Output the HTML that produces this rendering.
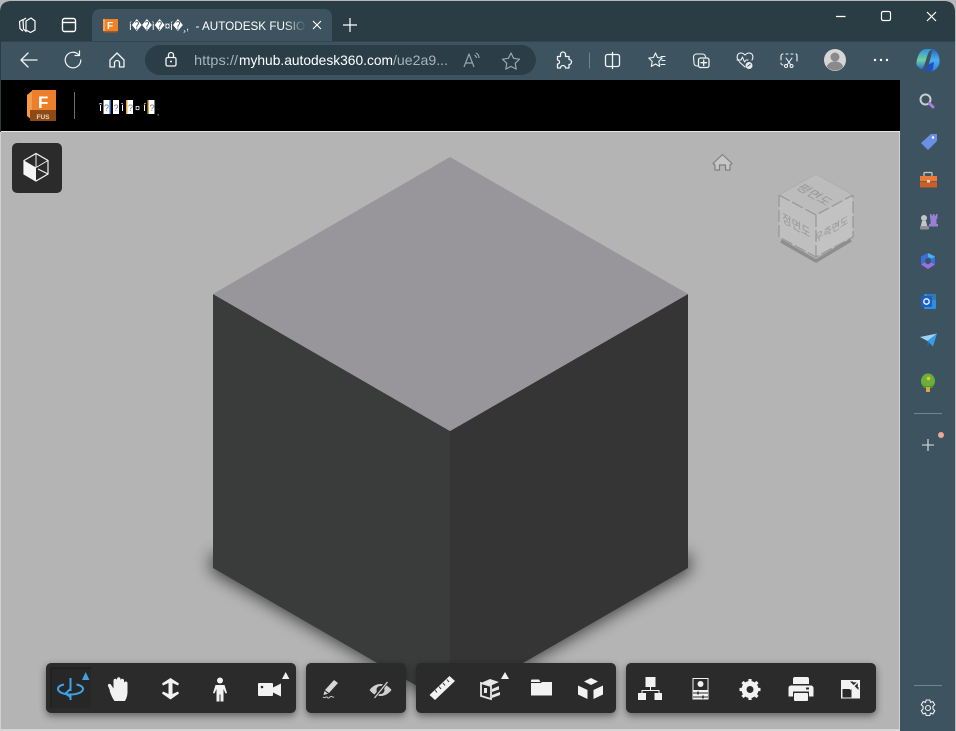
<!DOCTYPE html>
<html><head><meta charset="utf-8"><style>
html,body{margin:0;padding:0;width:956px;height:731px;overflow:hidden;background:#b5b5b5}
svg{position:absolute;left:0;top:0;display:block}
text{font-family:"Liberation Sans","Noto Sans CJK KR",sans-serif}
</style></head><body>
<svg width="956" height="731" viewBox="0 0 956 731" xmlns="http://www.w3.org/2000/svg">
<defs>
<filter id="sh" x="-20%" y="-30%" width="140%" height="160%"><feGaussianBlur stdDeviation="8"/></filter>
<filter id="bs" x="-20%" y="-40%" width="140%" height="180%"><feGaussianBlur stdDeviation="4"/></filter>
<linearGradient id="fade" x1="0" x2="1"><stop offset="0" stop-color="#3d5460" stop-opacity="0"/><stop offset="1" stop-color="#3d5460"/></linearGradient>
<linearGradient id="copL" x1="0" y1="0" x2="0" y2="1"><stop offset="0" stop-color="#2f8fe0"/><stop offset=".55" stop-color="#6fd0a0"/><stop offset="1" stop-color="#2a6fd0"/></linearGradient>
<linearGradient id="copR" x1="0" y1="0" x2="0" y2="1"><stop offset="0" stop-color="#2b62c8"/><stop offset=".5" stop-color="#4ab0ee"/><stop offset="1" stop-color="#2f7fe0"/></linearGradient>
<clipPath id="tabclip"><rect x="125" y="12" width="181" height="26"/></clipPath>
<clipPath id="shclip"><rect x="1" y="132" width="899" height="581"/></clipPath>
</defs>
<!-- frame -->
<rect width="956" height="731" fill="#b7b7b7"/>
<path d="M0 731V12Q0 1 12 1H944Q955 1 955 12V731Z" fill="#2a3c44"/>
<rect x="1" y="41" width="954" height="39" fill="#3d5460"/>
<rect x="1" y="40.500" width="954" height="1" fill="#263840"/>
<rect x="900" y="80" width="55" height="651" fill="#3d5460"/>
<!-- tab -->
<path d="M92 41V18Q92 9 101 9H324Q332 9 332 18V41Z" fill="#3d5460"/>
<!-- tab strip icons -->
<g fill="none" stroke="#fff" stroke-width="1.200" stroke-linejoin="round">
<path d="M23 19.500l-3.500 2 .5 7 3 2.500"/>
<path d="M26 18l-3 2 .5 9 3 3"/>
<path d="M26 21l5-3 4 3v9l-4.500 2.500-4.500-2.500z"/>
<rect x="62.500" y="18.500" width="13" height="13" rx="2" stroke-width="1.400"/><path d="M62.500 22.500h13" stroke-width="1.400"/>
<path d="M343 25h14M350 18v14"/>
<path d="M836 16.500h9.500" stroke-width="1.300"/>
<rect x="881.500" y="11.500" width="9" height="9" rx="1.500"/>
<path d="M927 12l9 9M936 12l-9 9"/>
</g>
<path d="M103 19h12l3 0v12h-15z" fill="#ef8129"/><path d="M103 31h15l-1 1.500h-13z" fill="#a85a1c"/><path d="M103 19h2v12h-2z" fill="#f5a45f"/>
<text x="107" y="29" font-size="10" font-weight="bold" fill="#fff">F</text>
<g clip-path="url(#tabclip)">
<text x="129" y="30" font-size="12" fill="#fff" textLength="60" lengthAdjust="spacingAndGlyphs">í��ì�¤í�¸,</text>
<text x="195.500" y="30" font-size="12" fill="#fff" textLength="118" lengthAdjust="spacingAndGlyphs">- AUTODESK FUSION</text>
</g>
<rect x="284" y="14" width="22" height="22" fill="url(#fade)"/>
<path d="M313 21l8 8M321 21l-8 8" stroke="#fff" stroke-width="1.100"/>
<!-- toolbar -->
<rect x="145" y="45" width="391" height="30" rx="15" fill="#2b3e47"/>
<g fill="none" stroke="#f2f4f5" stroke-width="1.300" stroke-linecap="round" stroke-linejoin="round">
<path d="M21 60h16M28 53l-7 7 7 7"/>
<path d="M78.500 54.500A7.800 7.800 0 1 0 80.800 60" stroke-width="1.200"/><path d="M79.500 51v4.500H75" stroke-width="1.200"/>
<path d="M110 60l7-7 7 7v7h-4.500v-4a2.500 2.500 0 0 0-5 0v4H110z"/>
<rect x="166" y="57.500" width="10" height="8.500" rx="1.500"/><path d="M168.500 57v-2a2.500 2.500 0 0 1 5 0v2"/>
<path d="M557.500 56.500h3v-2a2.500 2.500 0 0 1 5 0v2h3.500v3a2.500 2.500 0 0 1 0 5v3.500h-3.500a2.500 2.500 0 0 0-5 0h-3v-4a2 2 0 0 0 0-4z"/>
<rect x="605.500" y="54.500" width="14" height="12" rx="2"/>
<path d="M612.500 52.500v16"/>
<path d="M655.500 53l2 4.500 4.700.600-3.400 3.300 .9 5-4.200-2.400-4.200 2.400 .9-5-3.400-3.300 4.700-.600z" stroke-width="1.100"/>
<path d="M661 56.500h4M662 60.500h3M661 64.500h4" stroke-width="1.100"/>
<path d="M698 66h-1a3 3 0 0 1-3-3l-.5-6a3 3 0 0 1 3-3h6a3 3 0 0 1 3 3" stroke-width="1.100"/>
<rect x="698.500" y="58" width="10.500" height="9.500" rx="2"/><path d="M703.700 60v5.500M701 62.700h5.500"/>
<path d="M739 61c-3.500-4-1.500-8 2-8 2 0 3 1 4 2 1-1 2-2 4-2 3.500 0 5 3.500 3 7M739.500 62l5.500 5" stroke-width="1.100"/>
<path d="M737 60h4l1.500-3 2 5 1.500-2h2" stroke-width="1"/>
<path d="M781 60v-4a2 2 0 0 1 2-2M786 54h2M791 54h2M796 54a2 2 0 0 1 1 2v5M781 63a2 2 0 0 0 2 2" stroke-width="1.100"/>
<path d="M786 58l5 7M792 58l-5 7" stroke-width="1"/>
<circle cx="786" cy="66" r="1.500" stroke-width="1"/><circle cx="791.500" cy="66" r="1.500" stroke-width="1"/>
</g>
<circle cx="171" cy="61.500" r="1" fill="#f2f4f5"/>
<circle cx="749" cy="65.500" r="3.500" fill="#e8ecee"/><path d="M747.500 66.500l3-2.500" stroke="#3d5460" stroke-width="1"/>
<path d="M589.500 52.500v16" stroke="#6f838d" stroke-width="1"/>
<g fill="none" stroke="#9aa6ab" stroke-width="1.200" stroke-linejoin="round">
<path d="M464 67l5-13 5 13M466 63h6M476 53c2 1 3 3 3 5M474.500 55c1 .5 2 2 2 3"/>
<path d="M511 53l2.600 5.300 5.900.9-4.300 4.100 1 5.800-5.200-2.700-5.200 2.700 1-5.800-4.300-4.100 5.900-.9z"/>
</g>
<text x="194" y="65" font-size="14" fill="#a9b3b8" textLength="44" lengthAdjust="spacingAndGlyphs">https://</text>
<text x="239" y="65" font-size="14" fill="#fff" textLength="154" lengthAdjust="spacingAndGlyphs">myhub.autodesk360.com</text>
<text x="393" y="65" font-size="14" fill="#a9b3b8" textLength="55" lengthAdjust="spacingAndGlyphs">/ue2a9...</text>
<circle cx="835" cy="60" r="11" fill="#d6d6d6"/>
<circle cx="835" cy="57" r="4.500" fill="#8a8a8a"/><path d="M827 67a8 5.500 0 0 1 16 0 11 11 0 0 1-16 0z" fill="#8a8a8a"/>
<circle cx="875" cy="60" r="1.200" fill="#fff"/><circle cx="881" cy="60" r="1.200" fill="#fff"/><circle cx="887" cy="60" r="1.200" fill="#fff"/>
<!-- copilot -->
<path d="M933 49C936 50 939 54 939.500 60 940 65 937 71 930 71H922C926 71 928 68 929 64L931 56C931.500 53 932 50 933 49Z" fill="url(#copR)"/>
<path d="M916.500 62C918 54 921 49 927 49H933C929 50 928 53 926 60L924 66C923 69 921 70 919.500 68 917 66 916 65 916.500 62Z" fill="url(#copL)"/>
<path d="M922 71H930C931 71 933 70 933 68L934 62C931 63 929 64 927.500 66 926 69 924 71 922 71Z" fill="#1f4fc0"/>
<!-- page header -->
<rect x="1" y="80" width="899" height="51" fill="#000"/>
<rect x="1" y="131" width="899" height="1.500" fill="#e6e6e6"/>
<rect x="1" y="132" width="899" height="597" fill="#b4b4b4"/>
<rect x="0" y="729" width="900" height="2" fill="#d6d6d6"/>
<rect x="0" y="132" width="1" height="599" fill="#d2d2d2"/>
<rect x="899" y="132" width="1" height="599" fill="#d2d2d2"/>
<path d="M27 116V95l6-5h23v31H33z" fill="#f39a4b"/>
<rect x="32" y="90" width="24" height="21" fill="#ee7f2a"/>
<path d="M30 110H56V121H30z" fill="#8e4a16"/>
<text x="38" y="108" font-size="17" font-weight="bold" fill="#fff">F</text>
<text x="36.500" y="119" font-size="6.500" font-weight="bold" fill="#e8d5c4">FUS</text>
<rect x="74" y="92" width="1" height="27" fill="#6e6e6e"/>
<g font-size="11" fill="#fff">
<text x="99" y="111">î</text>
<rect x="103.500" y="100" width="6" height="14" fill="#fff"/><rect x="109.500" y="100" width="1.500" height="14" fill="#1466c4"/>
<rect x="113" y="100" width="6" height="14" fill="#fff"/>
<text x="121" y="111">ì</text>
<rect x="126" y="100" width="1.500" height="14" fill="#e8a030"/><rect x="127.500" y="100" width="5.500" height="14" fill="#fff"/>
<text x="135" y="111" font-size="9">¤</text>
<text x="143" y="111">í</text>
<rect x="147.500" y="100" width="1.500" height="14" fill="#e8a030"/><rect x="149" y="100" width="5.500" height="14" fill="#fff"/>
<text x="157" y="114" font-size="7">¸</text>
</g>
<g font-size="9" fill="#6a7a90"><text x="104" y="111">?</text><text x="113.500" y="111">?</text><text x="128" y="111">?</text><text x="149.500" y="111">?</text></g>
<!-- cube -->
<g clip-path="url(#shclip)"><path d="M213 556L213 570 450 705 688 570 688 556Z" fill="#000" stroke="#000" stroke-width="4" opacity=".62" filter="url(#sh)"/></g>
<path d="M213 294L450 431V705L213 568Z" fill="#3a3c3b"/>
<path d="M688 294L450 431V705L688 568Z" fill="#353535"/>
<path d="M450 157L688 294 450 431 213 294Z" fill="#98969a"/>
<!-- view cube button -->
<rect x="12" y="143" width="50" height="50" rx="5" fill="#2b2b2b"/>
<path d="M24 160.500l12-7 12 7v13.500l-12 7-12-7z" fill="none" stroke="#f2f2f2" stroke-width="1.200"/>
<path d="M24 160.500l12 7v13.500l-12-7z" fill="#f5f5f5"/><path d="M36 153.500v14M36 167.500l12-7M38 169l10 5" stroke="#f2f2f2" stroke-width="1" fill="none"/>
<!-- home -->
<path d="M713 163.500l9.500-9 9.500 9-2 1.500V170h-4.500v-5h-6v5H715v-5z" fill="#c6c6c6" stroke="#7f7f7f" stroke-width="1.200" stroke-linejoin="round"/>
<!-- nav cube -->
<path d="M781 241L816 261 851 240" fill="none" stroke="#8e8e8e" stroke-width="3.500"/>
<path d="M816 174l37 21v42l-37 20-37-20v-42z" fill="#bfbfbf"/>
<path d="M816 174l37 21-37 20-37-20z" fill="#bcbcbc"/>
<path d="M816 215v42l37-20v-42z" fill="#c2c2c2"/>
<path d="M779 195l37 20 37-20M816 215v42M779 195v42l37 20 37-20v-42" fill="none" stroke="#999" stroke-width="1.300" stroke-dasharray="12 3"/>
<path d="M779 195l37-21 37 21" fill="none" stroke="#adadad" stroke-width="1"/>
<g fill="#989898">
<text transform="matrix(.866 .5 -.866 .5 795 188)" font-size="13">평면도</text>
<text transform="matrix(.866 .5 0 1 782 221.500)" font-size="12">정면도</text>
<text transform="matrix(.866 -.5 0 1 815 242.500)" font-size="10.500">우측면도</text>
</g>
<!-- bottom toolbars -->
<g filter="url(#bs)" fill="#000" opacity=".45">
<rect x="46" y="666" width="250" height="50" rx="5"/><rect x="306" y="666" width="100" height="50" rx="5"/><rect x="416" y="666" width="200" height="50" rx="5"/><rect x="626" y="666" width="250" height="50" rx="5"/>
</g>
<g fill="#2b2b2b">
<rect x="46" y="663" width="250" height="50" rx="5"/><rect x="306" y="663" width="100" height="50" rx="5"/><rect x="416" y="663" width="200" height="50" rx="5"/><rect x="626" y="663" width="250" height="50" rx="5"/>
</g>
<rect x="51" y="668" width="40" height="40" fill="#272727"/>
<path d="M51 708v-40h40" fill="none" stroke="#1b1b1b" stroke-width="1"/>
<!-- orbit -->
<g fill="none" stroke="#3fa3e6" stroke-width="2">
<path d="M70.500 678v13M70.500 695v5"/>
<path d="M64 684.500c-4 .8-6 2.500-6 4.500 0 3 5.500 5.500 12.500 5.500s12.500-2.500 12.500-5.500c0-2-2.500-3.700-6.500-4.500"/>
<path d="M70.500 689l-5 4.500 5 3.500"/>
</g>
<path d="M82 680l3.700-8 3.700 8z" fill="#3fa3e6"/>
<!-- hand -->
<path d="M110 690.500l-2-4.500c-.7-2 2-3 3.200-1l2.300 3.500v-8c0-2.300 3.500-2.300 3.500 0v-1.500c0-2.300 3.500-2.300 3.500 0v1.500c0-2.300 3.500-2.300 3.500 0v2.500c0-2 3.500-2 3.500 0v9c0 4-1.500 7-2.500 9h-10.500c-1.500-2-3.500-6-5-10.500z" fill="#f2f2f2"/>
<!-- up/down -->
<path d="M170.500 678l-8.500 5.500 1 2 5.500-2.500v11l-5.500-2.500-1 2 8.500 6 8.500-6-1-2-5.500 2.500v-11l5.500 2.500 1-2z" fill="#f2f2f2"/>
<!-- person -->
<circle cx="220" cy="680.500" r="3" fill="#f2f2f2"/><path d="M215.500 685h9l2.500 8-1.500.5-2-4.500v12.500h-3v-7h-1v7h-3v-12.500l-2 4.500-1.500-.5z" fill="#f2f2f2"/>
<!-- camera -->
<rect x="258" y="683" width="15" height="13" rx="1" fill="#f2f2f2"/><path d="M273 687.500l8-4v13l-8-4z" fill="#f2f2f2"/><circle cx="262" cy="687" r="1.300" fill="#2b2b2b"/>
<path d="M282 679l3.700-7 3.700 7z" fill="#f2f2f2"/>
<!-- markup pen -->
<path d="M334 680l4 3-9 10-4-3z" fill="#d8d8d8"/><path d="M324.500 691l3.500 2.800-4.500 1.200z" fill="#d8d8d8"/>
<path d="M323 697c2 2 3-1 4 0s1 2 3 0 2 1 4 0" fill="none" stroke="#c8c8c8" stroke-width="1"/>
<!-- eye -->
<path d="M369.500 690c6-8 16-8 22 0-6 8-16 8-22 0z" fill="#cfcfcf"/>
<circle cx="380.500" cy="690" r="4" fill="#2b2b2b"/><path d="M387 682l-13 16" stroke="#2b2b2b" stroke-width="3.500"/><path d="M387.500 682l-13 16" stroke="#cfcfcf" stroke-width="1.300"/>
<!-- ruler -->
<path d="M429.500 695l20-19 5.500 5-20 19z" fill="#f2f2f2"/>
<path d="M435 690l2 2.500M439 686.500l2 2.500M443 683l2 2.500M447 679.500l2 2.500" stroke="#2b2b2b" stroke-width="1"/>
<!-- section box -->
<path d="M481 683l10 3v13l-10-3z" fill="none" stroke="#e8e8e8" stroke-width="1.800"/>
<path d="M481 683l9-4 9 3-9 4z" fill="#e8e8e8"/><path d="M492 689l7-3v3.500l-7 2.500zM492 695l8-3v3l-8 3z" fill="#e8e8e8"/><path d="M484 688h3v5h-3z" fill="#e8e8e8"/>
<path d="M501 679l4-7 4 7z" fill="#f2f2f2"/>
<!-- folder -->
<path d="M531 682v-1.500a1 1 0 0 1 1-1h7l1.500 2.500z" fill="#f2f2f2"/><path d="M531 683h10l1-1h10v13.500h-21z" fill="#f2f2f2"/>
<!-- explode -->
<path d="M591 678l7 3.500-7 3.500-7-3.500z" fill="#f2f2f2"/><path d="M578 685.500l9.500 4.500v9l-9.500-4.500zM603 685.500l-9.500 4.500v9l9.500-4.500z" fill="#f2f2f2"/>
<!-- tree -->
<rect x="645.500" y="677" width="10" height="10" fill="#f2f2f2"/>
<path d="M650.500 687v3.500M642 693v-2.500h17v2.500" stroke="#f2f2f2" stroke-width="1" fill="none"/>
<rect x="638" y="693" width="8" height="7" fill="#f2f2f2"/><rect x="654.500" y="693" width="7.500" height="7" fill="#f2f2f2"/>
<!-- props -->
<rect x="692.500" y="678" width="16" height="21.500" fill="#f2f2f2"/><rect x="693.500" y="679" width="14" height="11" fill="#2b2b2b"/>
<circle cx="700.500" cy="684" r="3" fill="#f2f2f2"/>
<path d="M693 693h15M693 697h15" stroke="#2b2b2b" stroke-width="1"/><path d="M698 691.500v3M703 695.500v3" stroke="#2b2b2b" stroke-width="1.500"/>
<!-- gear -->
<circle cx="750" cy="689.500" r="6" fill="none" stroke="#f2f2f2" stroke-width="5"/>
<g stroke="#f2f2f2" stroke-width="3.200"><path d="M750 679v4M750 696v4M739.500 689.500h4M756.500 689.500h4M742.500 682l3 3M754.500 694l3 3M742.500 697l3-3M754.500 685l3-3"/></g>
<!-- print -->
<path d="M793 684v-5a2 2 0 0 1 2-2h12a2 2 0 0 1 2 2v5z" fill="#f2f2f2"/>
<path d="M791 685.500h20a2.500 2.500 0 0 1 2.500 2.500v8.500H809v-5h-16v5h-4.500V688a2.500 2.500 0 0 1 2.500-2.500z" fill="#f2f2f2"/>
<rect x="794" y="693" width="14" height="8" rx="1" fill="#f2f2f2"/><rect x="806" y="687.500" width="3" height="2" fill="#2b2b2b"/>
<!-- fullscreen -->
<rect x="841" y="680" width="19" height="18.500" fill="#f2f2f2"/>
<rect x="842.500" y="689" width="9" height="8.500" fill="#2b2b2b"/>
<path d="M850 681.500h8.500v8.500z" fill="#2b2b2b"/>
<path d="M850 689.500l8-7.500M853 681.500h5.500V687" stroke="#f2f2f2" stroke-width="1.400" fill="none"/>
<!-- sidebar icons -->
<circle cx="925.500" cy="99.500" r="5" fill="none" stroke="#c8cdd0" stroke-width="2"/><path d="M929.500 103.500l3.500 3.500" stroke="#a77de0" stroke-width="3" stroke-linecap="round"/>
<path d="M921 143l10-9h6v7l-9 9z" fill="#6c8fe6"/><circle cx="933" cy="137.500" r="1.200" fill="#fff"/>
<path d="M924 176v-2.500a1 1 0 0 1 1-1h6a1 1 0 0 1 1 1v2.500" fill="none" stroke="#c9c3bd" stroke-width="1.300"/>
<path d="M920 176h17v5h-17z" fill="#ec7a3a"/><path d="M920 181.500h17v6h-17z" fill="#c85f28"/><rect x="927" y="180" width="3" height="2.500" fill="#f5d5c0"/>
<circle cx="924" cy="218" r="3" fill="#c5c5c5"/><path d="M922 221h4l1.500 6h-7z" fill="#c5c5c5"/><rect x="920" y="226" width="9" height="3.500" rx="1" fill="#8f8f8f"/>
<path d="M930 214h1.500v1.500h1.500V214h1.500v1.500h1.500V214h1.500v4l-1 1v5h1.500v2.500H929V224h1.500v-5l-.5-1z" fill="#9a7fd8"/>
<path d="M928 253l7 3.500v8L928 269l-7-4.500v-8z" fill="#3a6fd8"/><path d="M928 253l7 3.500-3 2-4-1.500z" fill="#44b3e8"/><path d="M921 264.500l7 4.500 7-4.500-4-2-3 2-3-2z" fill="#9a6fe0"/><circle cx="928" cy="261" r="3" fill="#3d5460"/>
<rect x="924" y="294" width="12" height="15" rx="1" fill="#2f8fe0"/><rect x="927" y="294" width="9" height="6" fill="#3d5460" opacity=".35"/>
<rect x="921" y="296" width="11" height="11" rx="1" fill="#1b5fc4"/><circle cx="926.500" cy="301.500" r="2.700" fill="none" stroke="#fff" stroke-width="1.300"/>
<path d="M920 337l17-3.500-9.500 7.500z" fill="#9ed2f2"/><path d="M927.500 341l9.500-7.500-4 13z" fill="#3a9be6"/><path d="M927.500 341l0 5 2.500-3z" fill="#1f6fc0"/>
<ellipse cx="928" cy="381" rx="7" ry="7.500" fill="#6bae3a"/><path d="M921.500 384c2 3 11 3 13 0l-2 4h-9z" fill="#4f9130"/>
<rect x="926" y="387" width="4" height="5" fill="#d8a93a"/><circle cx="928.500" cy="378.500" r="1.800" fill="#f0c040"/>
<rect x="914" y="413" width="28" height="1" fill="#6d8692"/>
<path d="M928 439v12M922 445h12" stroke="#dfe5e8" stroke-width="1.100"/>
<circle cx="941" cy="435" r="3" fill="#eca796"/>
<rect x="914" y="685" width="28" height="1" fill="#6d8692"/>
<g transform="translate(928,708)" fill="none" stroke="#eef1f2" stroke-width="1.100"><circle r="2.500"/><path d="M-1.800-8h3.600l.7 2.400 2.300-.9 1.900 3.200-1.800 1.800.1 2.500 1.800 1.700-1.900 3.200-2.300-.8-.8 2.400H-1.800l-.7-2.400-2.300.8-1.900-3.200 1.800-1.700v-2.500L-6.700-3.300l1.900-3.200 2.300.9z"/></g>
</svg>
</body></html>
